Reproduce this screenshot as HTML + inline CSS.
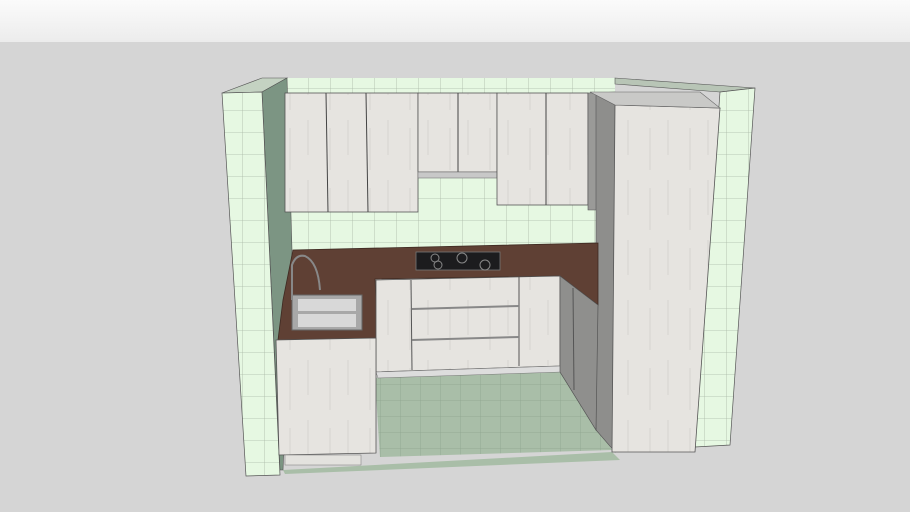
<!DOCTYPE html>
<html><head><meta charset="utf-8"><style>
html,body{margin:0;padding:0;width:910px;height:512px;overflow:hidden;background:#d5d5d5}
svg{display:block}
</style></head><body>
<svg width="910" height="512" viewBox="0 0 910 512" xmlns="http://www.w3.org/2000/svg">
<defs>
<linearGradient id="sky" x1="0" y1="0" x2="0" y2="1"><stop offset="0" stop-color="#fbfbfb"/><stop offset="1" stop-color="#ececec"/></linearGradient>
<pattern id="tile" width="22" height="22" patternUnits="userSpaceOnUse"><rect width="22" height="22" fill="#e6f8e2"/><path d="M0 0H22M0 0V22" stroke="#a9b8a6" stroke-width="0.8"/></pattern>
<pattern id="ftile" width="20" height="16" patternUnits="userSpaceOnUse"><rect width="20" height="16" fill="#a9bea8"/><path d="M0 0H20M0 0V16" stroke="#8ea48e" stroke-width="0.8"/></pattern>
<pattern id="wood" width="40" height="60" patternUnits="userSpaceOnUse"><rect width="40" height="60" fill="#e6e4e0"/><path d="M10 8V50M28 0V35" stroke="#dcdad6" stroke-width="1.5"/></pattern>
</defs>
<rect width="910" height="42" fill="url(#sky)"/>
<rect y="42" width="910" height="470" fill="#d5d5d5"/>
<polygon points="375,378 560,366 612,450 380,457" fill="url(#ftile)"/>
<polygon points="283,470 612,452 620,460 285,474" fill="#a9bea8"/>
<rect x="285" y="78" width="330" height="175" fill="url(#tile)"/>
<polygon points="222,93 262,78 287,78 262,92" fill="#c4d2c2" stroke="#555" stroke-width="0.6"/>
<polygon points="262,92 287,78 292,250 283,470 280,470" fill="#7c9583" stroke="#555" stroke-width="0.6"/>
<polygon points="222,93 262,92 280,475 246,476" fill="url(#tile)" stroke="#555" stroke-width="0.7"/>
<polygon points="615,78 755,88 720,92 615,84" fill="#b8c5b6" stroke="#555" stroke-width="0.6"/>
<polygon points="720,92 755,88 730,445 695,447" fill="url(#tile)" stroke="#555" stroke-width="0.7"/>
<rect x="285" y="93" width="133" height="119" fill="url(#wood)" stroke="#555" stroke-width="0.8"/>
<line x1="326" y1="93" x2="328" y2="212" stroke="#444"/><line x1="366" y1="93" x2="368" y2="212" stroke="#444"/>
<rect x="418" y="93" width="79" height="79" fill="url(#wood)" stroke="#555" stroke-width="0.8"/>
<line x1="458" y1="93" x2="458" y2="172" stroke="#444"/>
<rect x="418" y="172" width="79" height="6" fill="#c8c8c8" stroke="#777" stroke-width="0.6"/>
<rect x="497" y="93" width="91" height="112" fill="url(#wood)" stroke="#555" stroke-width="0.8"/>
<line x1="546" y1="93" x2="546" y2="205" stroke="#444"/>
<polygon points="588,93 615,92 615,210 588,210" fill="#9a9a98" stroke="#555" stroke-width="0.6"/>
<polygon points="596,95 615,105 615,452 596,430" fill="#8e8e8c" stroke="#555" stroke-width="0.6"/>
<polygon points="615,105 720,108 695,452 612,452" fill="url(#wood)" stroke="#555" stroke-width="0.8"/>
<polygon points="590,92 700,92 720,108 615,105" fill="#c9c9c7" stroke="#666" stroke-width="0.6"/>
<polygon points="293,250 598,243 598,305 560,276 375,279 378,338 278,340 283,300" fill="#5f4034" stroke="#3e2a22" stroke-width="0.8"/>
<rect x="416" y="252" width="84" height="18" fill="#1c1c1e" stroke="#777" stroke-width="0.8"/>
<circle cx="435" cy="258" r="4" fill="none" stroke="#888"/><circle cx="462" cy="258" r="5" fill="none" stroke="#888"/>
<circle cx="438" cy="265" r="4" fill="none" stroke="#888"/><circle cx="485" cy="265" r="5" fill="none" stroke="#888"/>
<rect x="292" y="295" width="70" height="35" fill="#a8a8a8" stroke="#666"/>
<rect x="298" y="299" width="58" height="12" fill="#d8d8d8"/><rect x="298" y="314" width="58" height="13" fill="#d8d8d8"/>
<path d="M292 300 V265 Q296 254 305 256 Q318 262 320 290" fill="none" stroke="#888" stroke-width="2"/>
<polygon points="376,280 560,276 560,366 376,372" fill="url(#wood)" stroke="#555" stroke-width="0.8"/>
<line x1="411" y1="280" x2="412" y2="370" stroke="#555"/><line x1="519" y1="277" x2="519" y2="366" stroke="#555"/>
<line x1="412" y1="309" x2="519" y2="306" stroke="#888" stroke-width="2"/><line x1="412" y1="340" x2="519" y2="337" stroke="#888" stroke-width="2"/>
<polygon points="376,372 560,366 562,372 378,378" fill="#ddd" stroke="#777" stroke-width="0.5"/>
<polygon points="560,276 598,305 596,430 560,372" fill="#8f8f8d" stroke="#555" stroke-width="0.7"/>
<line x1="573" y1="288" x2="574" y2="390" stroke="#555"/>
<polygon points="276,340 376,338 376,453 279,455" fill="url(#wood)" stroke="#555" stroke-width="0.8"/>
<rect x="285" y="455" width="76" height="10" fill="#e3e2de" stroke="#777" stroke-width="0.5"/>
</svg>
</body></html>
